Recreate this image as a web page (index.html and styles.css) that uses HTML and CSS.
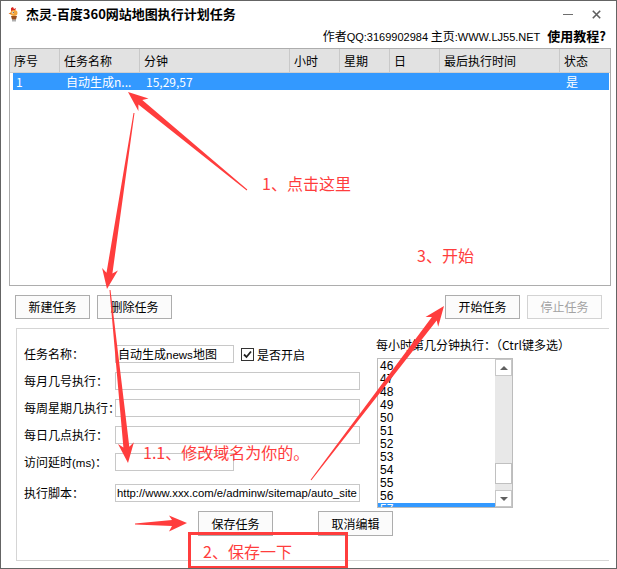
FILE: index.html
```html
<!DOCTYPE html>
<html lang="zh-CN">
<head>
    <meta charset="UTF-8">
    <title>杰灵-百度360网站地图执行计划任务</title>
    <link rel="stylesheet" href="styles.css">
</head>
<body>
    <div class="window">
        <div class="titlebar">
            <svg class="app-icon" viewBox="0 0 11 15" width="11" height="15">
                <path d="M3 1 L5 0 L6 2 L8 1 L7 4 L3 4Z" fill="#d9261c"/>
                <ellipse cx="6" cy="6" rx="3.5" ry="3" fill="#f2a33a"/>
                <path d="M0.5 6.5 L3 5.5 L3 7.5Z" fill="#e0701a"/>
                <circle cx="5" cy="5.5" r="1.1" fill="#fff"/>
                <circle cx="5.2" cy="5.6" r="0.5" fill="#000"/>
                <path d="M3 9 H9 L8 12.5 H4Z" fill="#9a4f1f"/>
                <path d="M5 12.5 V14.5 M7 12.5 V14.5" stroke="#333" stroke-width="0.8"/>
            </svg>
            <span class="title">杰灵-百度360网站地图执行计划任务</span>
            <div class="win-controls">
                <span class="win-min"></span>
                <svg class="win-close" viewBox="0 0 9 9" width="9" height="9">
                    <path d="M0.8 0.8 L8.2 8.2 M8.2 0.8 L0.8 8.2" stroke="#5f5f5f" stroke-width="1.6"/>
                </svg>
            </div>
        </div>

        <div class="info">作者<span class="latin">QQ:3169902984</span> 主页<span class="latin">:WWW.LJ55.NET</span><b class="help">使用教程?</b></div>

        <div class="listview">
            <div class="lv-head">
                <span>序号</span>
                <span>任务名称</span>
                <span>分钟</span>
                <span>小时</span>
                <span>星期</span>
                <span>日</span>
                <span>最后执行时间</span>
                <span>状态</span>
            </div>
            <div class="lv-row selected">
                <span>1</span>
                <span>自动生成n...</span>
                <span>15,29,57</span>
                <span></span>
                <span></span>
                <span></span>
                <span></span>
                <span>是</span>
            </div>
        </div>

        <div class="toolbar">
            <div class="btn-group">
                <button class="btn">新建任务</button>
                <button class="btn">删除任务</button>
            </div>
            <div class="btn-group">
                <button class="btn">开始任务</button>
                <button class="btn" disabled>停止任务</button>
            </div>
        </div>

        <div class="editor">
            <div class="form">
                <div class="field">
                    <span class="field-label">任务名称：</span>
                    <div class="input short">自动生成<span class="latin">news</span>地图</div>
                    <label class="check">
                        <span class="check-box">
                            <svg viewBox="0 0 11 11" width="11" height="11"><path d="M2 5.5 L4.5 8 L9 2.5" stroke="#222" stroke-width="1.8" fill="none"/></svg>
                        </span>
                        是否开启
                    </label>
                </div>
                <div class="field">
                    <span class="field-label">每月几号执行：</span>
                    <div class="input"></div>
                </div>
                <div class="field">
                    <span class="field-label">每周星期几执行：</span>
                    <div class="input"></div>
                </div>
                <div class="field">
                    <span class="field-label">每日几点执行：</span>
                    <div class="input"></div>
                </div>
                <div class="field">
                    <span class="field-label">访问延时<span class="latin">(ms)</span>：</span>
                    <div class="input short"></div>
                </div>
                <div class="field script">
                    <span class="field-label">执行脚本：</span>
                    <div class="input url">http://www.xxx.com/e/adminw/sitemap/auto_site</div>
                </div>
                <div class="actions">
                    <button class="btn tall">保存任务</button>
                    <button class="btn tall">取消编辑</button>
                </div>
            </div>

            <div class="minutes">
                <div class="minutes-label">每小时第几分钟执行：（Ctrl键多选）</div>
                <div class="listbox">
                    <ul class="items">
                        <li>46</li>
                        <li>47</li>
                        <li>48</li>
                        <li>49</li>
                        <li>50</li>
                        <li>51</li>
                        <li>52</li>
                        <li>53</li>
                        <li>54</li>
                        <li>55</li>
                        <li>56</li>
                        <li class="selected">57</li>
                    </ul>
                    <div class="scrollbar">
                        <div class="sb-btn"><span class="arrow-up"></span></div>
                        <div class="sb-track"><div class="sb-thumb"></div></div>
                        <div class="sb-btn"><span class="arrow-down"></span></div>
                    </div>
                </div>
            </div>
        </div>

        <!-- red hints drawn over the window -->
        <div class="notes">
            <svg class="arrows" viewBox="0 0 617 569" width="617" height="569">
                <polygon points="128,92 148.5,98.5 142.3,99.9 247.3,189.6 246.7,190.4 138.4,104.5 138.4,110.9"/>
                <polygon points="107,289 102.1,268 106.5,272.7 133.5,112.9 134.5,113.1 112.4,273.6 117.9,270.4"/>
                <polygon points="128,463 118,443.9 123.4,447.4 109.5,290 110.5,290 129.3,446.8 133.9,442.3"/>
                <polygon points="444,306 438.2,326.8 436.7,320.5 311.4,480.3 310.6,479.7 431.9,316.9 425.5,317"/>
                <polygon points="187,523 169,531.5 172,526 135,524.4 135,523.6 172,520 169,515.5"/>
            </svg>
            <span class="note note-click">1、点击这里</span>
            <span class="note note-start">3、开始</span>
            <span class="note note-domain">1.1、修改域名为你的。</span>
            <span class="note-box"></span>
            <span class="note note-save">2、保存一下</span>
        </div>
    </div>
</body>
</html>
```

FILE: styles.css
```css
body {
    margin: 0;
    font-family: "Noto Sans CJK SC", sans-serif;
    font-size: 12px;
    color: #000;
    background: #fff;
}

.latin {
    font-family: "Liberation Sans", sans-serif;
    font-size: 11.5px;
}

.window {
    position: relative;
    width: 617px;
    height: 569px;
    box-sizing: border-box;
    border: 1px solid #646464;
    background: #fff;
    overflow: hidden;
}

.titlebar {
    display: flex;
    align-items: center;
    height: 26px;
    padding: 0 15px 0 7px;
}

.title {
    margin-left: 7px;
    font-size: 13px;
    font-weight: bold;
    line-height: 16px;
}

.win-controls {
    margin-left: auto;
    display: flex;
    align-items: center;
    gap: 19px;
}

.win-min {
    width: 10px;
    height: 1px;
    background: #6e6e6e;
}

.info {
    height: 18px;
    line-height: 18px;
    text-align: right;
    padding-right: 10px;
    white-space: nowrap;
}

.info .latin {
    font-size: 11px;
}

.info .help {
    margin-left: 7px;
    font-size: 13px;
}

.listview {
    margin: 3px 0 0 8px;
    width: 602px;
    height: 238px;
    box-sizing: border-box;
    border: 1px solid #adadad;
}

.lv-head {
    display: grid;
    grid-template-columns: 50px 80px 150px 50px 50px 50px 120px 1fr;
    height: 24px;
    box-sizing: border-box;
    background: #e2e2e2;
    border-bottom: 1px solid #cfcfcf;
}

.lv-head span {
    padding-left: 4px;
    line-height: 23px;
    border-right: 1px solid #c9c9c9;
}

.lv-head span:last-child {
    border-right: none;
}

.lv-row {
    display: grid;
    grid-template-columns: 46px 80px 150px 50px 50px 50px 120px 1fr;
    height: 17px;
    line-height: 17px;
    margin: 0 1px 0 3px;
}

.lv-row span {
    padding-left: 7px;
    white-space: nowrap;
    overflow: hidden;
}

.lv-row span:first-child {
    padding-left: 3px;
}

.lv-row.selected {
    background: #3399ff;
    color: #fff;
}

.toolbar {
    display: flex;
    justify-content: space-between;
    margin-top: 9px;
    padding: 0 14px;
}

.btn-group {
    display: flex;
    gap: 7px;
}

.btn {
    width: 75px;
    height: 24px;
    box-sizing: border-box;
    padding: 0;
    border: 1px solid #adadad;
    background: #fbfbfb;
    font-family: inherit;
    font-size: 12px;
    line-height: 22px;
    color: #000;
}

.btn:disabled {
    color: #a3a3a3;
    border-color: #d3d3d3;
    background: #fcfcfc;
}

.btn.tall {
    height: 25px;
}

.editor {
    display: flex;
    margin: 9px 7px 0 15px;
    height: 233px;
    box-sizing: border-box;
    border-top: 1px solid #d5d5d5;
    border-left: 1px solid #d5d5d5;
    border-bottom: 1px solid #d5d5d5;
    padding-left: 7px;
}

.form {
    width: 336px;
    flex-shrink: 0;
    padding-top: 16px;
}

.field {
    display: flex;
    align-items: center;
    height: 18px;
    margin-bottom: 9px;
}

.field.script {
    margin-top: 13px;
}

.field-label {
    width: 91px;
    flex-shrink: 0;
    line-height: 14px;
    white-space: nowrap;
}

.input {
    width: 245px;
    height: 18px;
    box-sizing: border-box;
    border: 1px solid #c8c8c8;
    padding: 0 2px;
    line-height: 16px;
    white-space: nowrap;
    overflow: hidden;
}

.input.short {
    width: 119px;
}

.input.url {
    font-family: "Liberation Sans", sans-serif;
    font-size: 11.3px;
    padding-left: 1px;
}

.check {
    display: flex;
    align-items: center;
    margin-left: 7px;
    gap: 3px;
    white-space: nowrap;
}

.check-box {
    width: 13px;
    height: 13px;
    box-sizing: border-box;
    border: 1px solid #333;
    background: #fff;
    display: flex;
}

.actions {
    display: flex;
    gap: 45px;
    margin-left: 174px;
}

.actions .btn {
    flex-shrink: 0;
}

.minutes {
    margin-left: 16px;
    padding-top: 9px;
}

.minutes-label {
    line-height: 14px;
    white-space: nowrap;
}

.listbox {
    display: flex;
    margin: 6px 0 0 1px;
    width: 136px;
    height: 150px;
    box-sizing: border-box;
    border: 1px solid #bcbcbc;
}

.items {
    flex: 1;
    list-style: none;
    margin: 0;
    padding: 1px 0 0;
    overflow: hidden;
    font-family: "Liberation Sans", sans-serif;
}

.items li {
    height: 13px;
    line-height: 13px;
    padding-left: 2px;
}

.items li.selected {
    background: #3399ff;
    color: #fff;
}

.scrollbar {
    width: 17px;
    display: flex;
    flex-direction: column;
    background: #e8e8e8;
}

.sb-btn {
    height: 17px;
    box-sizing: border-box;
    border: 1px solid #c8c8c8;
    background: #fff;
    display: flex;
    align-items: center;
    justify-content: center;
}

.arrow-up {
    border-left: 4px solid transparent;
    border-right: 4px solid transparent;
    border-bottom: 4px solid #606060;
}

.arrow-down {
    border-left: 4px solid transparent;
    border-right: 4px solid transparent;
    border-top: 4px solid #606060;
}

.sb-track {
    flex: 1;
    display: flex;
    flex-direction: column;
}

.sb-thumb {
    margin-top: auto;
    margin-bottom: 6px;
    height: 21px;
    box-sizing: border-box;
    border: 1px solid #c0c0c0;
    background: #fff;
}

/* annotation layer */
.notes {
    position: absolute;
    left: -1px;
    top: -1px;
    width: 617px;
    height: 569px;
    pointer-events: none;
}

.arrows {
    position: absolute;
    left: 0;
    top: 0;
    fill: #ff3d3d;
}

.note {
    position: absolute;
    color: #ff3d3d;
    font-size: 16px;
    line-height: 20px;
    white-space: nowrap;
}

.note-click {
    left: 262px;
    top: 173px;
}

.note-start {
    left: 417px;
    top: 245px;
}

.note-domain {
    left: 143px;
    top: 442px;
}

.note-save {
    left: 203px;
    top: 541px;
}

.note-box {
    position: absolute;
    left: 188px;
    top: 532px;
    width: 160px;
    height: 37px;
    box-sizing: border-box;
    border: 3px solid #ff3d3d;
}
```
